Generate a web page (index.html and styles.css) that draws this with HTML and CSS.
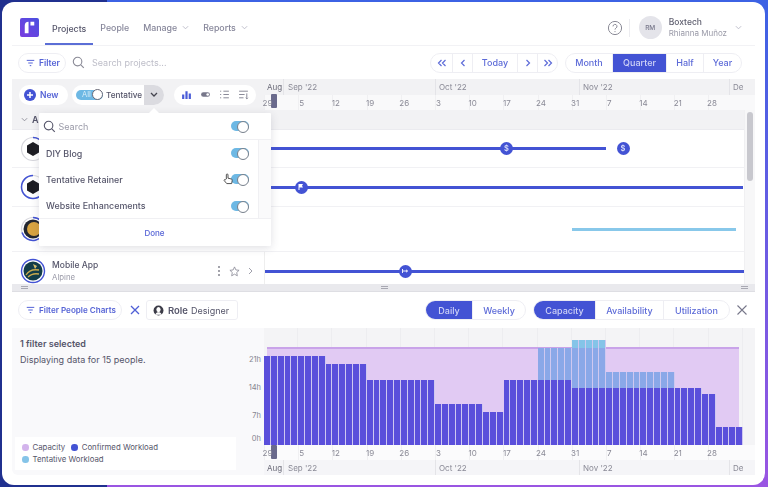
FILE: index.html
```html
<!DOCTYPE html>
<html lang="en">
<head>
<meta charset="utf-8">
<title>Projects</title>
<link rel="stylesheet" href="styles.css">
</head>
<body>
<div class="panel">
  <main class="app">
    <header class="topnav">
      <svg class="logo" viewBox="0 0 20 20"><defs><linearGradient id="lg" x1="1" y1="0" x2="0" y2="1"><stop offset="0" stop-color="#4a50e0"/><stop offset="1" stop-color="#7a3ce0"/></linearGradient></defs><rect width="20" height="20" rx="2" fill="url(#lg)"/><path d="M5 16V8a4 4 0 0 1 4-4v12z M11 4h4v4h-4z" fill="#fff"/></svg>
      <nav class="tabs">
        <a class="tab active">Projects</a>
        <a class="tab">People</a>
        <a class="tab">Manage <svg class="chev" viewBox="0 0 8 5"><path d="M1 1l3 3 3-3"/></svg></a>
        <a class="tab">Reports <svg class="chev" viewBox="0 0 8 5"><path d="M1 1l3 3 3-3"/></svg></a>
      </nav>
      <div class="account">
        <svg class="help" viewBox="0 0 16 16"><circle cx="8" cy="8" r="6.600"/><path d="M6 6.400a2 2 0 1 1 3 1.700c-.7.400-1 .8-1 1.500"/><circle class="dot" cx="8" cy="11.600" r=".6"/></svg>
        <span class="divider"></span>
        <span class="avatar">RM</span>
        <div class="who"><b>Boxtech</b><span>Rhianna Muñoz</span></div>
        <svg class="chev wide" viewBox="0 0 8 5"><path d="M1 1l3 3 3-3"/></svg>
      </div>
    </header>

    <section class="searchbar">
      <button class="pill btn-filter"><svg class="ico" viewBox="0 0 12 10"><path d="M1 1.500h10M3 5h6M5 8.500h2"/></svg>Filter</button>
      <svg class="search" viewBox="0 0 14 14"><circle cx="6" cy="6" r="4.600"/><path d="M9.500 9.500l3.200 3.200"/></svg>
      <span class="placeholder">Search projects...</span>
      <div class="seg nav-seg">
        <span class="seg-a w21"><svg class="step" viewBox="0 0 10 8"><path d="M4.500 1L1.500 4l3 3M8.500 1l-3 3 3 3"/></svg></span>
        <span class="seg-a w20"><svg class="step" viewBox="0 0 10 8"><path d="M6.500 1l-3 3 3 3"/></svg></span>
        <span class="seg-a w45">Today</span>
        <span class="seg-a w20"><svg class="step" viewBox="0 0 10 8"><path d="M3.500 1l3 3-3 3"/></svg></span>
        <span class="seg-a w20"><svg class="step" viewBox="0 0 10 8"><path d="M1.500 1l3 3-3 3M5.500 1l3 3-3 3"/></svg></span>
      </div>
      <div class="seg view-seg">
        <span class="seg-a w46">Month</span><span class="seg-a w54 on">Quarter</span><span class="seg-a w37">Half</span><span class="seg-a w38">Year</span>
      </div>
    </section>

    <section class="gantt-head">
      <div class="controls">
        <button class="pill btn-new"><svg class="plus" viewBox="0 0 12 12"><circle cx="6" cy="6" r="6"/><path d="M6 3v6M3 6h6"/></svg>New</button>
        <div class="pill tent">
          <span class="allsw">All<i></i></span><span class="tent-l">Tentative</span>
          <span class="tent-dd"><svg viewBox="0 0 8 5"><path d="M1 1l3 3 3-3"/></svg></span>
        </div>
        <div class="pill tools">
          <svg viewBox="0 0 10 10"><path class="solid" d="M1 5h2v4H1zM4 2h2v7H4zM7 4h2v5H7z"/></svg>
          <svg viewBox="0 0 10 10"><rect class="grey" x="1" y="3" width="8" height="4" rx="2"/><circle cx="7" cy="5" r="1.200" fill="#fff"/></svg>
          <svg viewBox="0 0 10 10"><path class="ln" d="M1 2h1M4 2h5M1 5h1M4 5h5M1 8h1M4 8h5"/></svg>
          <svg viewBox="0 0 10 10"><path class="ln" d="M1 2h8M1 5h5M1 8h4M8 4v5M7 8l1 1 1-1"/></svg>
        </div>
      </div>
      <div class="scale">
        <div class="months"><span class="m-aug">Aug</span><span class="m-sep">Sep '22</span><span class="m-oct">Oct '22</span><span class="m-nov">Nov '22</span><span class="m-dec">De</span></div>
        <div class="days">
          <span class="today"></span>
          <span class="d"><i>29</i></span><span class="d"><i>5</i></span><span class="d"><i>12</i></span><span class="d"><i>19</i></span><span class="d"><i>26</i></span><span class="d"><i>3</i></span><span class="d"><i>10</i></span><span class="d"><i>17</i></span><span class="d"><i>24</i></span><span class="d"><i>31</i></span><span class="d"><i>7</i></span><span class="d"><i>14</i></span><span class="d"><i>21</i></span><span class="d"><i>28</i></span>
        </div>
      </div>
    </section>

    <section class="gantt">
      <div class="rows">
        <div class="group"><svg class="chev" viewBox="0 0 8 5"><path d="M1 1l3 3 3-3"/></svg><span>All</span></div>
        <div class="row h38">
          <div class="who-col"><svg class="pic" viewBox="0 0 26 26"><circle class="ring-g" cx="13" cy="13" r="11.500"/><path class="ring-b" d="M13 1.500a11.500 11.500 0 0 1 10 6"/><circle cx="13" cy="13" r="9" fill="#fff"/><path d="M13 6l6 3.500v7L13 20l-6-3.500v-7z" fill="#1c1c22"/></svg></div>
          <div class="track"><span class="line blue l0"></span><span class="mark m1">$</span><span class="mark m2">$</span></div>
        </div>
        <div class="row h39">
          <div class="who-col"><svg class="pic" viewBox="0 0 26 26"><circle class="ring-g" cx="13" cy="13" r="11.500"/><path class="ring-b" d="M13 1.500a11.500 11.500 0 1 0 11.500 11.500"/><circle cx="13" cy="13" r="9" fill="#fff"/><path d="M13 6l6 3.500v7L13 20l-6-3.500v-7z" fill="#1c1c22"/></svg></div>
          <div class="track"><span class="line blue l1"></span><span class="mark m3"><svg viewBox="0 0 8 8"><path d="M1.500 7V1h4.500L5 2.700 6 4.400H2.500V7z" fill="#fff"/></svg></span></div>
        </div>
        <div class="row h45">
          <div class="who-col"><svg class="pic" viewBox="0 0 26 26"><circle class="ring-g" cx="13" cy="13" r="11.500"/><path class="ring-b" d="M13 1.500a11.500 11.500 0 1 1-11 15"/><circle cx="13" cy="13" r="9.500" fill="#222630"/><circle cx="14" cy="13" r="7" fill="#d9a441"/></svg></div>
          <div class="track"><span class="line sky l2"></span></div>
        </div>
        <div class="row h33">
          <div class="who-col"><svg class="pic" viewBox="0 0 26 26"><circle cx="13" cy="13" r="11.500" fill="none" stroke="#4353d4" stroke-width="1.400"/><circle cx="13" cy="13" r="9.500" fill="#123c48"/><path d="M6 17c3-5 7-6 13-5M8 19c3-3 6-4 11-3" fill="none" stroke="#c9a94c" stroke-width="1.400"/><path d="M13 6l4 2-2 3z" fill="#d8c070"/></svg>
            <div class="pname"><b>Mobile App</b><span>Alpine</span></div>
            <svg class="more" viewBox="0 0 4 12"><circle cx="2" cy="2" r="1"/><circle cx="2" cy="6" r="1"/><circle cx="2" cy="10" r="1"/></svg>
            <svg class="star" viewBox="0 0 12 12"><path d="M6 1l1.500 3.300 3.500.4-2.600 2.400.7 3.600L6 8.900l-3.100 1.800.7-3.600L1 4.700l3.500-.4z"/></svg>
            <svg class="go" viewBox="0 0 5 8"><path d="M1 1l3 3-3 3"/></svg>
          </div>
          <div class="track first"><span class="line blue l3"></span><span class="mark m4"><svg viewBox="0 0 8 8"><path d="M1.500 2v4M2 4h4.500M5 2.800L6.500 4 5 5.200" fill="none" stroke="#fff" stroke-width=".9"/></svg></span></div>
        </div>
      </div>
      <aside class="vscroll"><span></span></aside>
    </section>

    <div class="splitter"><span class="grip"></span><span class="grip"></span><span class="grip"></span></div>

    <section class="chartbar">
      <button class="pill btn-people"><svg class="ico" viewBox="0 0 12 10"><path d="M1 1.500h10M3 5h6M5 8.500h2"/></svg>Filter People Charts</button>
      <svg class="x blue-x" viewBox="0 0 10 10"><path d="M1 1l8 8M9 1l-8 8"/></svg>
      <div class="chip"><svg viewBox="0 0 12 12"><circle cx="6" cy="6" r="5.400" fill="#3c3c48"/><ellipse cx="6" cy="5" rx="2.300" ry="2.800" fill="#fff"/><path d="M2.600 10.500c.5-2 2-2.600 3.400-2.600s2.900.6 3.400 2.600z" fill="#fff"/></svg><b>Role</b><span>Designer</span></div>
      <div class="seg period"><span class="seg-a w46 on">Daily</span><span class="seg-a w53">Weekly</span></div>
      <div class="seg metric"><span class="seg-a w61 on">Capacity</span><span class="seg-a w68">Availability</span><span class="seg-a w66">Utilization</span></div>
      <svg class="x grey-x" viewBox="0 0 10 10"><path d="M.5.5l9 9M9.500.5l-9 9"/></svg>
    </section>

    <section class="charts">
      <div class="side">
        <div class="info">
          <div class="intro"><b>1 filter selected</b><p>Displaying data for 15 people.</p></div>
          <div class="legend">
            <span class="li"><i class="dot-cap"></i>Capacity</span><span class="li"><i class="dot-conf"></i>Confirmed Workload</span>
            <span class="li"><i class="dot-tent"></i>Tentative Workload</span>
          </div>
        </div>
        <div class="yaxis"><span>21h</span><span>14h</span><span>7h</span><span>0h</span></div>
      </div>
      <div class="plotwrap">
        <div class="plot">
          <div class="capacity"></div>
          <div class="bars">
            <i class="bar"><b class="c" style="height:89px"></b></i><i class="bar"><b class="c" style="height:89px"></b></i><i class="bar"><b class="c" style="height:89px"></b></i><i class="bar"><b class="c" style="height:89px"></b></i><i class="bar"><b class="c" style="height:89px"></b></i><i class="bar"><b class="c" style="height:89px"></b></i><i class="bar"><b class="c" style="height:89px"></b></i><i class="bar"><b class="c" style="height:89px"></b></i><i class="bar"><b class="c" style="height:89px"></b></i>
            <i class="bar"><b class="c" style="height:81px"></b></i><i class="bar"><b class="c" style="height:81px"></b></i><i class="bar"><b class="c" style="height:81px"></b></i><i class="bar"><b class="c" style="height:81px"></b></i><i class="bar"><b class="c" style="height:81px"></b></i><i class="bar"><b class="c" style="height:81px"></b></i>
            <i class="bar"><b class="c" style="height:65px"></b></i><i class="bar"><b class="c" style="height:65px"></b></i><i class="bar"><b class="c" style="height:65px"></b></i><i class="bar"><b class="c" style="height:65px"></b></i><i class="bar"><b class="c" style="height:65px"></b></i><i class="bar"><b class="c" style="height:65px"></b></i><i class="bar"><b class="c" style="height:65px"></b></i><i class="bar"><b class="c" style="height:65px"></b></i><i class="bar"><b class="c" style="height:65px"></b></i><i class="bar"><b class="c" style="height:65px"></b></i>
            <i class="bar"><b class="c" style="height:41px"></b></i><i class="bar"><b class="c" style="height:41px"></b></i><i class="bar"><b class="c" style="height:41px"></b></i><i class="bar"><b class="c" style="height:41px"></b></i><i class="bar"><b class="c" style="height:41px"></b></i><i class="bar"><b class="c" style="height:41px"></b></i><i class="bar"><b class="c" style="height:41px"></b></i>
            <i class="bar"><b class="c" style="height:33px"></b></i><i class="bar"><b class="c" style="height:33px"></b></i><i class="bar"><b class="c" style="height:33px"></b></i>
            <i class="bar"><b class="c" style="height:65px"></b></i><i class="bar"><b class="c" style="height:65px"></b></i><i class="bar"><b class="c" style="height:65px"></b></i><i class="bar"><b class="c" style="height:65px"></b></i><i class="bar"><b class="c" style="height:65px"></b></i>
            <i class="bar"><b class="t" style="height:32px"></b><b class="c" style="height:65px"></b></i><i class="bar"><b class="t" style="height:32px"></b><b class="c" style="height:65px"></b></i><i class="bar"><b class="t" style="height:32px"></b><b class="c" style="height:65px"></b></i><i class="bar"><b class="t" style="height:32px"></b><b class="c" style="height:65px"></b></i><i class="bar"><b class="t" style="height:32px"></b><b class="c" style="height:65px"></b></i>
            <i class="bar"><b class="o" style="height:8px"></b><b class="t" style="height:40px"></b><b class="c" style="height:57px"></b></i><i class="bar"><b class="o" style="height:8px"></b><b class="t" style="height:40px"></b><b class="c" style="height:57px"></b></i><i class="bar"><b class="o" style="height:8px"></b><b class="t" style="height:40px"></b><b class="c" style="height:57px"></b></i><i class="bar"><b class="o" style="height:8px"></b><b class="t" style="height:40px"></b><b class="c" style="height:57px"></b></i><i class="bar"><b class="o" style="height:8px"></b><b class="t" style="height:40px"></b><b class="c" style="height:57px"></b></i>
            <i class="bar"><b class="t" style="height:16px"></b><b class="c" style="height:57px"></b></i><i class="bar"><b class="t" style="height:16px"></b><b class="c" style="height:57px"></b></i><i class="bar"><b class="t" style="height:16px"></b><b class="c" style="height:57px"></b></i><i class="bar"><b class="t" style="height:16px"></b><b class="c" style="height:57px"></b></i><i class="bar"><b class="t" style="height:16px"></b><b class="c" style="height:57px"></b></i><i class="bar"><b class="t" style="height:16px"></b><b class="c" style="height:57px"></b></i><i class="bar"><b class="t" style="height:16px"></b><b class="c" style="height:57px"></b></i><i class="bar"><b class="t" style="height:16px"></b><b class="c" style="height:57px"></b></i><i class="bar"><b class="t" style="height:16px"></b><b class="c" style="height:57px"></b></i><i class="bar"><b class="t" style="height:16px"></b><b class="c" style="height:57px"></b></i>
            <i class="bar"><b class="c" style="height:57px"></b></i><i class="bar"><b class="c" style="height:57px"></b></i><i class="bar"><b class="c" style="height:57px"></b></i><i class="bar"><b class="c" style="height:57px"></b></i>
            <i class="bar"><b class="c" style="height:51px"></b></i><i class="bar"><b class="c" style="height:51px"></b></i>
            <i class="bar"><b class="c" style="height:18px"></b></i><i class="bar"><b class="c" style="height:18px"></b></i><i class="bar"><b class="c" style="height:18px"></b></i><i class="bar"><b class="c" style="height:18px"></b></i>
          </div>
        </div>
        <div class="scale under">
          <div class="days">
            <span class="today"></span>
            <span class="d"><i>29</i></span><span class="d"><i>5</i></span><span class="d"><i>12</i></span><span class="d"><i>19</i></span><span class="d"><i>26</i></span><span class="d"><i>3</i></span><span class="d"><i>10</i></span><span class="d"><i>17</i></span><span class="d"><i>24</i></span><span class="d"><i>31</i></span><span class="d"><i>7</i></span><span class="d"><i>14</i></span><span class="d"><i>21</i></span><span class="d"><i>28</i></span>
          </div>
          <div class="months"><span class="m-aug">Aug</span><span class="m-sep">Sep '22</span><span class="m-oct">Oct '22</span><span class="m-nov">Nov '22</span><span class="m-dec">De</span></div>
        </div>
      </div>
    </section>

    <div class="popover">
      <span class="arrow"></span>
      <div class="pop-search">
        <svg class="search dark" viewBox="0 0 14 14"><circle cx="6" cy="6" r="4.600"/><path d="M9.500 9.500l3.200 3.200"/></svg>
        <span class="pop-ph">Search</span><span class="sw"></span>
      </div>
      <div class="pop-body">
        <ul class="pop-list">
          <li>DIY Blog<span class="sw"></span></li>
          <li>Tentative Retainer<span class="sw"></span><svg class="hand" viewBox="0 0 12 14"><path d="M4 7V2a1 1 0 0 1 2 0v4l4 1c1 .3 1 1 1 2l-.6 3.500H4.500L1.500 9c-.6-.8.3-1.800 1.200-1z" fill="#fff" stroke="#333" stroke-width="1"/></svg></li>
          <li>Website Enhancements<span class="sw"></span></li>
        </ul>
        <div class="pop-track"></div>
      </div>
      <div class="pop-foot">Done</div>
    </div>
  </main>
</div>
</body>
</html>
```

FILE: styles.css
```css
* { box-sizing: border-box; }
html, body { height: 100%; }
body {
  margin: 0;
  overflow: hidden;
  font-family: Inter, "Liberation Sans", sans-serif;
  font-size: 9px;
  color: #55556a;
  background:
    linear-gradient(to right, #20308f 0, #20308f 107px, transparent 107px),
    linear-gradient(to bottom, #3c62e4, #9a55e2);
  padding: 2px 3px 2px 2px;
}
.panel {
  height: 483px;
  background: #fff;
  border-radius: 12px;
  padding: 10px;
}
.app {
  position: relative;
  height: 463px;
  display: flex;
  flex-direction: column;
  filter: blur(0.4px);
}
svg { display: block; flex: none; }
b { font-weight: 600; }
button { font: inherit; }

/* top nav */
.topnav { height: 34px; display: flex; align-items: center; border-bottom: 1px solid #f2f2f5; padding-left: 8px; }
.logo { width: 19px; height: 19px; margin-right: 6px; margin-top: -2px; }
.tabs { display: flex; height: 100%; align-items: center; }
.tab { display: flex; align-items: center; gap: 5px; height: 100%; padding: 0 7px 2px; color: #86869a; font-size: 8.800px; font-weight: 500; }
.tab.active { color: #55556a; border-bottom: 2px solid #5b6ed6; padding: 2px 7px 0; }
.chev { width: 7px; height: 5px; fill: none; stroke: #b8b8c6; stroke-width: 1; }
.chev.wide { width: 7px; margin-left: 8px; margin-right: 13px; }
.account { margin-left: auto; display: flex; align-items: center; margin-top: -2px; }
.help { width: 16px; height: 16px; fill: none; stroke: #8a8a96; stroke-width: 1; }
.help .dot { fill: #8a8a96; stroke: none; }
.divider { width: 1px; height: 18px; background: #ececf0; margin: 0 9px 0 6px; }
.avatar { width: 23px; height: 23px; border-radius: 50%; background: #e4e4ea; color: #77778a; font-size: 6.500px; font-weight: 500; display: flex; align-items: center; justify-content: center; margin-right: 7px; }
.who { display: flex; flex-direction: column; gap: 1px; line-height: 10px; }
.who b { color: #606070; font-weight: 500; font-size: 8.500px; }
.who span { color: #9a9aa8; font-size: 8px; }

/* search row */
.searchbar { height: 33px; display: flex; align-items: center; padding-left: 6px; padding-right: 13px; }
.pill { border: 1px solid #eeeef3; border-radius: 11px; background: #fff; display: flex; align-items: center; }
.btn-filter { width: 48px; height: 20px; padding: 0 0 0 7px; gap: 4px; color: #5563d6; font-weight: 600; font-size: 8.500px; }
.btn-people { width: 104px; height: 20px; padding: 0 0 0 7px; gap: 4px; color: #5563d6; font-weight: 600; font-size: 8.100px; white-space: nowrap; }
.ico { width: 9px; height: 8px; fill: none; stroke: #4f5fd6; stroke-width: 1.300; }
.search { width: 13px; height: 13px; fill: none; stroke: #8a8a96; stroke-width: 1.200; margin-left: 6px; }
.search.dark { stroke: #55556a; margin-left: 0; }
.placeholder { margin-left: 7px; color: #bdbdc8; font-size: 9px; }
.seg { display: flex; height: 20px; border: 1px solid #eeeef3; border-radius: 11px; overflow: hidden; background: #fff; }
.seg-a { display: flex; align-items: center; justify-content: center; border-left: 1px solid #eeeef3; color: #5d6bd8; font-weight: 500; font-size: 9px; }
.seg-a:first-child { border-left: 0; }
.seg-a.on { background: #4353d4; color: #cfd3f6; }
.step { width: 10px; height: 8px; fill: none; stroke: #5d6bd8; stroke-width: 1.200; }
.nav-seg { margin-left: auto; }
.view-seg { margin-left: 7px; }
.w20 { width: 20px; } .w21 { width: 21px; } .w45 { width: 45px; } .w46 { width: 46px; } .w53 { width: 53px; } .w54 { width: 54px; }
.w37 { width: 37px; } .w38 { width: 38px; } .w61 { width: 61px; } .w68 { width: 68px; } .w66 { width: 66px; }

/* gantt header */
.gantt-head { display: flex; height: 31px; background: #f2f2f4; }
.controls { width: 252px; display: flex; align-items: center; padding-left: 7px; }
.btn-new { width: 49px; height: 20px; gap: 4px; padding: 0 0 0 5px; color: #5563d6; font-weight: 600; font-size: 8.500px; border: 0; }
.plus { width: 12px; height: 12px; }
.plus circle { fill: #4353d4; }
.plus path { stroke: #fff; stroke-width: 1.500; }
.tent { width: 92px; height: 20px; margin-left: 4px; border: 0; overflow: hidden; padding-left: 4px; }
.allsw { position: relative; width: 27px; height: 10px; border-radius: 5px; background: #6db8e4; color: #d8ecf8; font-size: 7.500px; display: flex; align-items: center; padding-left: 6px; }
.allsw i { position: absolute; right: 0; top: -0.500px; width: 11px; height: 11px; background: #fff; border: 1px solid #6a6a78; border-radius: 50%; }
.tent-l { margin-left: 3px; font-size: 8.200px; font-weight: 500; color: #55556a; }
.tent-dd { margin-left: auto; width: 20px; height: 100%; background: #dbdbe0; display: flex; align-items: center; justify-content: center; }
.tent-dd svg { width: 8px; height: 5px; fill: none; stroke: #45454f; stroke-width: 1.300; }
.tools { width: 82px; height: 20px; margin-left: 10px; border: 0; padding: 0 7px; justify-content: space-between; }
.tools svg { width: 11px; height: 11px; }
.solid { fill: #4a5cd8; }
.grey { fill: #77778a; }
.ln { fill: none; stroke: #8a8a98; stroke-width: .9; }

/* scale */
.scale { flex: 1; display: flex; flex-direction: column; color: #8a8a96; font-size: 8px; }
.months { position: relative; height: 16px; display: flex; align-items: center; }
.months span { height: 100%; display: flex; align-items: center; padding-left: 3px; border-right: 1px solid #e4e4e8; }
.m-aug { width: 20px; color: #6a6a78; }
.m-sep { width: 152px; padding-left: 4px !important; }
.m-oct { width: 144px; }
.m-nov { width: 150px; }
.m-dec { flex: 1; border-right: 0 !important; }
.days { position: relative; height: 15px; display: flex; align-items: center; background: #f9f9fa; }
.d { flex: 0 0 34.200px; height: 100%; border-left: 1px solid #f0f0f2; display: flex; align-items: center; }
.d:first-of-type { border-left: 0; }
.d i { position: relative; font-style: normal; width: 5px; display: flex; justify-content: center; }
.today { position: absolute; left: 7px; top: -1px; width: 6px; height: 14px; background: #6a6a8c; border-radius: 1px; }
.d:first-of-type i { width: 12px; color: #55556a; }

/* gantt body */
.gantt { display: flex; height: 174px; overflow: hidden; }
.rows { flex: 1; display: flex; flex-direction: column; }
.group { flex: none; height: 20px; background: #f2f2f4; border-bottom: 1px solid #ebebef; display: flex; align-items: center; gap: 4px; padding-left: 9px; font-weight: 600; }
.group .chev { stroke: #8a8a96; }
.row { flex: none; display: flex; border-bottom: 1px solid #f1f1f4; }
.row:last-child { border-bottom: 0; }
.h38 { height: 38px; } .h39 { height: 39px; } .h45 { height: 45px; } .h33 { height: 38px; }
.who-col { width: 252px; display: flex; align-items: center; padding-left: 8px; }
.pic { width: 26px; height: 26px; }
.ring-g { fill: none; stroke: #d6d6dc; stroke-width: 1.200; }
.ring-b { fill: none; stroke: #4353d4; stroke-width: 1.500; }
.pname { display: flex; flex-direction: column; margin-left: 6px; gap: 2px; line-height: 10px; }
.pname b { font-weight: 500; font-size: 8.500px; color: #55556a; }
.pname span { font-size: 7.800px; color: #9a9aa8; }
.more { width: 4px; height: 12px; margin-left: 119px; fill: #85858f; }
.star { width: 11px; height: 11px; margin-left: 7.500px; fill: none; stroke: #8a8a96; stroke-width: .9; }
.go { width: 5px; height: 8px; margin-left: 8px; fill: none; stroke: #a0a0ac; stroke-width: 1; }
.track { position: relative; flex: 1; }
.track.first { border-left: 1px solid #eee; }
.line { position: absolute; height: 3px; top: 50%; margin-top: -1.500px; }
.line.blue { background: #4353d4; }
.line.sky { background: #88c8ea; }
.l0 { left: 0; width: 342px; }
.l1 { left: 0; width: 479px; }
.l2 { left: 308px; width: 164px; }
.l3 { left: 0; width: 479px; }
.mark { position: absolute; top: 50%; width: 13px; height: 13px; margin: -6.500px 0 0 -6.500px; border-radius: 50%; background: #4353d4; color: #d8dcf8; font-size: 7.500px; font-weight: 600; display: flex; align-items: center; justify-content: center; }
.mark svg { width: 8px; height: 8px; }
.m1 { left: 242.500px; }
.m2 { left: 359px; }
.m3 { left: 37px; }
.m4 { left: 140px; }
.vscroll { width: 11px; background: #f7f7f8; border-left: 1px solid #f0f0f2; padding: 2px 2px 0 2px; }
.vscroll span { display: block; height: 69px; background: #c8c8ce; border-radius: 3px; }

.splitter { flex: none; height: 8px; background: #e9e9ed; border-bottom: 1px solid #dedee3; display: flex; align-items: center; justify-content: space-between; padding: 0 7px 0 9px; }
.grip { width: 7px; height: 3px; border-top: 1px solid #a8a8b2; border-bottom: 1px solid #a8a8b2; }

/* chart toolbar */
.chartbar { flex: none; height: 36px; display: flex; align-items: center; padding-left: 6px; padding-right: 8px; }
.x { width: 10px; height: 10px; fill: none; margin-left: 8px; }
.blue-x { stroke: #4f5fd6; stroke-width: 1.300; }
.grey-x { stroke: #77778a; stroke-width: 1.100; margin-left: 7px; }
.chip { margin-left: 6px; width: 92px; height: 20px; border: 1px solid #eeeef3; border-radius: 3px; display: flex; align-items: center; padding-left: 6px; gap: 4px; }
.chip svg { width: 11px; height: 11px; }
.chip b { font-size: 9.500px; color: #55556a; }
.chip span { font-size: 9px; margin-left: -1px; }
.period { margin-left: auto; }
.metric { margin-left: 7px; }

/* chart area */
.charts { flex: 1; display: flex; background: #f9f9fb; border-radius: 0 0 6px 6px; min-height: 0; }
.side { width: 252px; display: flex; }
.info { flex: 1; display: flex; flex-direction: column; justify-content: space-between; padding: 10px 0 5px 3px; }
.intro { padding-left: 5px; line-height: 12px; }
.intro b { color: #55556a; font-weight: 600; }
.intro p { margin: 4px 0 0; }
.legend { width: 221px; height: 33px; background: #fff; display: flex; flex-wrap: wrap; align-content: center; gap: 3px 6px; padding-left: 7px; font-size: 7.800px; line-height: 9px; }
.li { display: flex; align-items: center; gap: 4px; }
.li i { width: 6.500px; height: 6.500px; border-radius: 50%; }
.li:nth-child(3) { flex-basis: 100%; }
.dot-cap { background: #d3b4ec; } .dot-conf { background: #4353d4; } .dot-tent { background: #85c4e8; }
.yaxis { width: 28px; padding: 26px 3px 0 0; display: flex; flex-direction: column; align-items: flex-end; font-size: 7.500px; color: #85858f; }
.yaxis span { height: 28px; line-height: 12px; }
.yaxis span:nth-child(3) { height: 23px; }
.plotwrap { flex: 1; display: flex; flex-direction: column; min-width: 0; }
.plot { position: relative; flex: none; height: 117px; background: repeating-linear-gradient(to right, #f4f4f6 0, #f4f4f6 33.200px, #ededf0 33.200px, #ededf0 34.200px); }
.capacity { position: absolute; left: 3px; right: 16px; top: 19px; bottom: 0; background: #e1caf3; border-top: 2px solid #c9a3e9; }
.bars { position: absolute; left: 0; bottom: 0; width: 479px; height: 117px; display: flex; }
.bar { flex: 1; display: flex; flex-direction: column; justify-content: flex-end; }
.bar b { display: block; border-right: 1px solid #cfc8f0; }
.c { background: #5a4fdb; }
.t { background: #8aa8e8; }
.o { background: #84c4e8; }
.under { background: #f5f5f8; }
.under .months { height: 15px; }
.under .days { background: #fbfbfc; }
.under .today { top: 0; }

/* popover */
.popover { position: absolute; left: 26.500px; top: 101px; width: 232px; height: 133px; background: #fff; box-shadow: 0 2px 8px rgba(60,60,90,.16); display: flex; flex-direction: column; border-radius: 1px; font-size: 8.900px; }
.arrow { position: absolute; left: 110px; top: -5px; width: 0; height: 0; border: 5px solid transparent; border-top: 0; border-bottom-color: #fff; }
.pop-search { height: 27px; display: flex; align-items: center; padding: 0 21.500px 0 4px; border-bottom: 1px solid #f0f0f3; }
.pop-ph { margin-left: 3px; color: #9a9aa8; font-size: 9px; }
.sw { position: relative; margin-left: auto; width: 18px; height: 10px; border-radius: 5px; background: #6db8e4; }
.sw::after { content: ""; position: absolute; right: 0; top: 0; width: 10px; height: 10px; background: #fff; border: 1px solid #77808c; border-radius: 50%; }
.pop-body { display: flex; height: 79px; border-bottom: 1px solid #f0f0f3; }
.pop-list { flex: 1; list-style: none; margin: 0; padding: 0; }
.pop-list li { position: relative; height: 26.300px; display: flex; align-items: center; padding: 0 8.500px 0 7.500px; color: #55556a; font-weight: 500; }
.pop-track { width: 13px; background: #fafafb; border-left: 1px solid #f0f0f3; }
.hand { position: absolute; left: 184px; top: 7px; width: 10px; height: 12px; }
.pop-foot { flex: 1; display: flex; align-items: center; justify-content: center; color: #5563d6; font-weight: 500; font-size: 8px; }
```
